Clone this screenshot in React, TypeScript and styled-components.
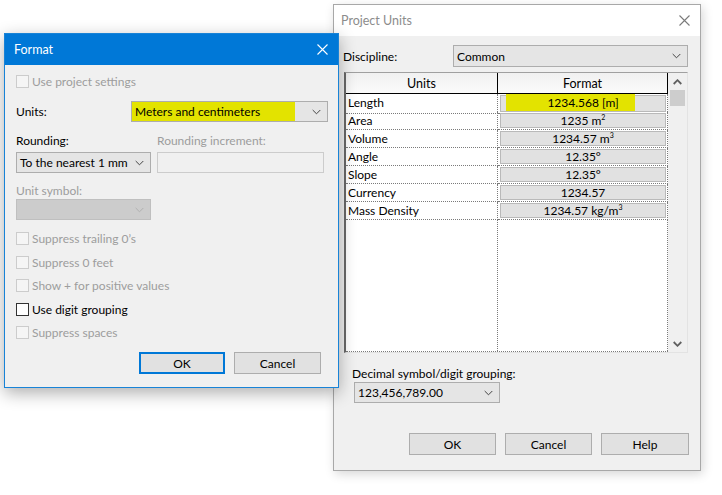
import styled, { createGlobalStyle } from 'styled-components'

const GlobalStyle = createGlobalStyle`
  body {
    margin: 0;
    background: #fff;
    font-family: Lato, 'Noto Sans', sans-serif;
    font-size: 12px;
    color: #000;
  }
`

const Desktop = styled.div`
  position: relative;
  width: 722px;
  height: 495px;
  overflow: hidden;
  background: #fff;
`

const Window = styled.div<{ $x: number; $y: number; $w: number; $h: number; $active?: boolean }>`
  position: absolute;
  left: ${(p) => p.$x}px;
  top: ${(p) => p.$y}px;
  width: ${(p) => p.$w}px;
  height: ${(p) => p.$h}px;
  box-sizing: border-box;
  display: flex;
  flex-direction: column;
  background: #f0f0f0;
  border: 1px solid ${(p) => (p.$active ? '#1883d7' : '#a8a8a8')};
  box-shadow: ${(p) => (p.$active ? '0 5px 16px rgba(0, 0, 0, 0.32)' : '2px 3px 10px rgba(0, 0, 0, 0.16)')};
`

const TitleBar = styled.div<{ $active?: boolean }>`
  height: 31px;
  flex-shrink: 0;
  display: flex;
  align-items: center;
  justify-content: space-between;
  padding: 0 10px 0 ${(p) => (p.$active ? 9 : 7)}px;
  background: ${(p) => (p.$active ? '#0078d7' : '#fff')};
  color: ${(p) => (p.$active ? '#fff' : '#8c8c8c')};
  font-size: 12.5px;
`

const Body = styled.div<{ $pad: string }>`
  flex: 1;
  display: flex;
  flex-direction: column;
  padding: ${(p) => p.$pad};
`

const Row = styled.div<{ $mt?: number; $ml?: number; $gap?: number }>`
  display: flex;
  align-items: center;
  gap: ${(p) => p.$gap ?? 0}px;
  margin-top: ${(p) => p.$mt ?? 0}px;
  margin-left: ${(p) => p.$ml ?? 0}px;
`

const Label = styled.span<{ $w?: number; $disabled?: boolean }>`
  display: inline-block;
  flex-shrink: 0;
  width: ${(p) => (p.$w ? `${p.$w}px` : 'auto')};
  color: ${(p) => (p.$disabled ? '#9d9d9d' : '#000')};
  line-height: 15px;
  white-space: nowrap;
`

const Select = styled.div<{ $w: number; $h?: number; $disabled?: boolean }>`
  width: ${(p) => p.$w}px;
  height: ${(p) => p.$h ?? 21}px;
  flex-shrink: 0;
  box-sizing: border-box;
  display: flex;
  align-items: center;
  justify-content: space-between;
  background: ${(p) => (p.$disabled ? '#cccccc' : '#e5e5e5')};
  border: 1px solid ${(p) => (p.$disabled ? '#bfbfbf' : '#adadad')};
  padding: 0 6px 0 3px;
  white-space: nowrap;
`

const Highlight = styled.span<{ $w: number }>`
  align-self: stretch;
  display: flex;
  align-items: center;
  width: ${(p) => p.$w}px;
  margin-left: -3px;
  padding-left: 3px;
  box-sizing: border-box;
  background: #e3e300;
`

const TextBox = styled.div<{ $w: number }>`
  width: ${(p) => p.$w}px;
  height: 21px;
  flex-shrink: 0;
  box-sizing: border-box;
  border: 1px solid #cccccc;
  background: #f0f0f0;
`

const Check = styled.span<{ $disabled?: boolean }>`
  width: 13px;
  height: 13px;
  box-sizing: border-box;
  border: 1px solid ${(p) => (p.$disabled ? '#cccccc' : '#333333')};
  background: ${(p) => (p.$disabled ? '#f5f5f5' : '#fff')};
  margin-right: 3px;
  flex-shrink: 0;
`

const ButtonRow = styled.div<{ $mt: number; $pr?: number }>`
  display: flex;
  justify-content: flex-end;
  gap: 9px;
  margin-top: ${(p) => p.$mt}px;
  padding-right: ${(p) => p.$pr ?? 0}px;
`

const Button = styled.div<{ $default?: boolean; $w?: number }>`
  width: ${(p) => p.$w ?? 87}px;
  height: 22px;
  box-sizing: border-box;
  display: flex;
  align-items: center;
  justify-content: center;
  background: #e1e1e1;
  border: ${(p) => (p.$default ? '2px solid #0078d7' : '1px solid #adadad')};
`

const Table = styled.div`
  margin: 5px 0 0 1px;
  width: 344px;
  height: 281px;
  flex-shrink: 0;
  box-sizing: border-box;
  display: flex;
  border-top: 1px solid #a0a0a0;
  border-left: 2px solid #696969;
  border-right: 1px solid #e3e3e3;
  border-bottom: 1px solid #e3e3e3;
  background: #fff;
`

const Grid = styled.div`
  width: 322px;
  display: flex;
  flex-direction: column;
  border-bottom: 1px dotted #7a7a7a;
`

const GridRow = styled.div<{ $h?: number; $fill?: boolean }>`
  display: grid;
  grid-template-columns: 152px 170px;
  height: ${(p) => (p.$fill ? 'auto' : `${p.$h ?? 18}px`)};
  flex: ${(p) => (p.$fill ? 1 : 'none')};
`

const HeaderCell = styled.div`
  display: flex;
  align-items: center;
  justify-content: center;
  box-sizing: border-box;
  background: linear-gradient(#f1f1f1, #fbfbfb);
  border-right: 1px solid #000;
  border-bottom: 1px solid #000;
  font-size: 12.5px;
`

const UnitCell = styled.div<{ $last?: boolean }>`
  box-sizing: border-box;
  padding-left: 2px;
  line-height: 17px;
  border-right: 1px dotted #7a7a7a;
  border-bottom: ${(p) => (p.$last ? 'none' : '1px dotted #7a7a7a')};
  white-space: nowrap;
`

const FormatCell = styled.div<{ $last?: boolean }>`
  box-sizing: border-box;
  padding: 1px 1px 1px 2px;
  border-right: 1px dotted #7a7a7a;
  border-bottom: ${(p) => (p.$last ? 'none' : '1px dotted #7a7a7a')};
  display: flex;
`

const FormatBox = styled.div`
  flex: 1;
  box-sizing: border-box;
  background: #e1e1e1;
  border: 1px solid #b9b9b9;
  display: flex;
  align-items: center;
  justify-content: center;
  white-space: nowrap;
  line-height: 13px;
  sup {
    font-size: 7px;
    line-height: 0;
    vertical-align: 5px;
  }
`

/* negative margin keeps the text centred while the mark runs further left */
const CellHighlight = styled.span`
  background: #e3e300;
  padding: 2px 16px 2px 41px;
  margin: -2px 0 0 -25px;
`

const Scrollbar = styled.div`
  width: 19px;
  display: flex;
  flex-direction: column;
  align-items: center;
  background: #f0f0f0;
`

const ScrollArrow = styled.div`
  height: 17px;
  width: 100%;
  display: flex;
  align-items: center;
  justify-content: center;
`

const Thumb = styled.div`
  width: 15px;
  height: 16px;
  background: #cdcdcd;
`

const Spacer = styled.div`
  flex: 1;
`

const Chevron = ({ color = '#444', up = false, bold = false }: { color?: string; up?: boolean; bold?: boolean }) => (
  <svg width="9" height="6" viewBox="0 0 9 6">
    <path
      d={up ? 'M0.7 5 L4.5 1.2 L8.3 5' : 'M0.7 1 L4.5 4.8 L8.3 1'}
      fill="none"
      stroke={color}
      strokeWidth={bold ? 1.8 : 1}
    />
  </svg>
)

const CloseIcon = ({ color }: { color: string }) => (
  <svg width="11" height="11" viewBox="0 0 11 11">
    <path d="M0.5 0.5 L10.5 10.5 M10.5 0.5 L0.5 10.5" stroke={color} strokeWidth="1.1" />
  </svg>
)

const units: { name: string; value: string; sup?: string; mark?: boolean }[] = [
  { name: 'Length', value: '1234.568 [m]', mark: true },
  { name: 'Area', value: '1235 m', sup: '2' },
  { name: 'Volume', value: '1234.57 m', sup: '3' },
  { name: 'Angle', value: '12.35°' },
  { name: 'Slope', value: '12.35°' },
  { name: 'Currency', value: '1234.57' },
  { name: 'Mass Density', value: '1234.57 kg/m', sup: '3' },
]

const options = [
  { text: 'Suppress trailing 0\u2019s', disabled: true },
  { text: 'Suppress 0 feet', disabled: true },
  { text: 'Show + for positive values', disabled: true },
  { text: 'Use digit grouping', disabled: false },
  { text: 'Suppress spaces', disabled: true },
]

function ProjectUnits() {
  return (
    <Window $x={333} $y={4} $w={368} $h={467}>
      <TitleBar>
        <span>Project Units</span>
        <CloseIcon color="#7a7a7a" />
      </TitleBar>
      <Body $pad="9px 11px 0 9px">
        <Row>
          <Label $w={110}>Discipline:</Label>
          <Select $w={235} $h={22}>
            <span>Common</span>
            <Chevron />
          </Select>
        </Row>
        <Table>
          <Grid>
            <GridRow $h={21}>
              <HeaderCell>Units</HeaderCell>
              <HeaderCell>Format</HeaderCell>
            </GridRow>
            {units.map((u) => (
              <GridRow key={u.name}>
                <UnitCell>{u.name}</UnitCell>
                <FormatCell>
                  <FormatBox>
                    {u.mark ? (
                      <CellHighlight>{u.value}</CellHighlight>
                    ) : (
                      <span>
                        {u.value}
                        {u.sup && <sup>{u.sup}</sup>}
                      </span>
                    )}
                  </FormatBox>
                </FormatCell>
              </GridRow>
            ))}
            <GridRow $fill>
              <UnitCell $last />
              <FormatCell $last />
            </GridRow>
          </Grid>
          <Scrollbar>
            <ScrollArrow>
              <Chevron up bold color="#606060" />
            </ScrollArrow>
            <Thumb />
            <Spacer />
            <ScrollArrow>
              <Chevron bold color="#606060" />
            </ScrollArrow>
          </Scrollbar>
        </Table>
        <Row $mt={13} $ml={9}>
          <Label>Decimal symbol/digit grouping:</Label>
        </Row>
        <Row $mt={1} $ml={11}>
          <Select $w={146}>
            <span>123,456,789.00</span>
            <Chevron />
          </Select>
        </Row>
        <ButtonRow $mt={30}>
          <Button>OK</Button>
          <Button>Cancel</Button>
          <Button $w={88}>Help</Button>
        </ButtonRow>
      </Body>
    </Window>
  )
}

function FormatDialog() {
  return (
    <Window $x={4} $y={33} $w={335} $h={355} $active>
      <TitleBar $active>
        <span>Format</span>
        <CloseIcon color="#fff" />
      </TitleBar>
      <Body $pad="9px 10px 0 11px">
        <Row>
          <Check $disabled />
          <Label $disabled>Use project settings</Label>
        </Row>
        <Row $mt={12}>
          <Label $w={115}>Units:</Label>
          <Select $w={197}>
            <Highlight $w={163}>Meters and centimeters</Highlight>
            <Chevron />
          </Select>
        </Row>
        <Row $mt={11}>
          <Label $w={141}>Rounding:</Label>
          <Label $disabled>Rounding increment:</Label>
        </Row>
        <Row $mt={4} $gap={6}>
          <Select $w={135}>
            <span>To the nearest 1 mm</span>
            <Chevron />
          </Select>
          <TextBox $w={167} />
        </Row>
        <Row $mt={10}>
          <Label $disabled>Unit symbol:</Label>
        </Row>
        <Row $mt={1}>
          <Select $w={135} $disabled>
            <span />
            <Chevron color="#b0b0b0" />
          </Select>
        </Row>
        {options.map((o, i) => (
          <Row key={o.text} $mt={i === 0 ? 11 : 8.5}>
            <Check $disabled={o.disabled} />
            <Label $disabled={o.disabled}>{o.text}</Label>
          </Row>
        ))}
        <ButtonRow $mt={12} $pr={7}>
          <Button $default $w={86}>
            OK
          </Button>
          <Button>Cancel</Button>
        </ButtonRow>
      </Body>
    </Window>
  )
}

export default function App() {
  return (
    <>
      <GlobalStyle />
      <Desktop>
        <ProjectUnits />
        <FormatDialog />
      </Desktop>
    </>
  )
}
